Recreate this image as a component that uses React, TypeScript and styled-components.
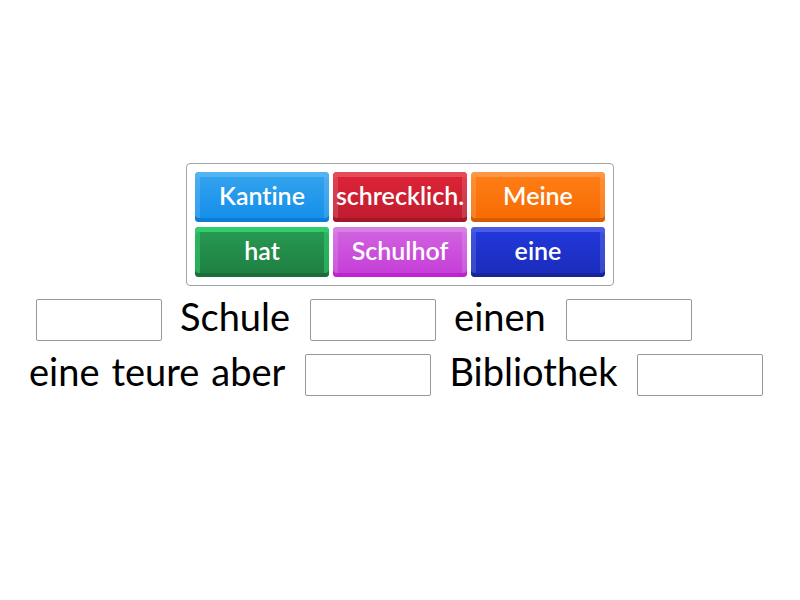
import React from "react";
import styled, { createGlobalStyle } from "styled-components";

const GlobalStyle = createGlobalStyle`
  * { box-sizing: border-box; }
  body {
    margin: 0;
    background: #fff;
    color: #000;
    font-family: Lato, "Noto Sans", sans-serif;
  }
`;

const Page = styled.main`
  display: flex;
  flex-direction: column;
  padding: 163px 0 32px;
`;

const WordTray = styled.section`
  align-self: center;
  display: grid;
  grid-template-columns: repeat(3, 134px);
  gap: 5px 4px;
  padding: 8px;
  border: 1px solid #a3a3a8;
  border-radius: 4px;
`;

type Tone = { top: string; bottom: string; rim: string; side: string; base: string };

const Tile = styled.button<{ $tone: Tone }>`
  display: flex;
  align-items: center;
  justify-content: center;
  height: 50px;
  padding: 0 0 4px;
  border: 0;
  border-radius: 4px;
  background: linear-gradient(${({ $tone }) => `${$tone.top}, ${$tone.bottom}`});
  box-shadow: ${({ $tone }) =>
    `inset 0 -4px ${$tone.base}, inset 0 5px ${$tone.rim}, inset 5px 0 ${$tone.side}, inset -5px 0 ${$tone.side}`};
  color: #fff;
  font: 600 25px/30px Lato, "Noto Sans", sans-serif;
  font-variant-ligatures: none;
  white-space: nowrap;
  cursor: grab;
`;

const Sentence = styled.section`
  display: flex;
  flex-direction: column;
  gap: 13px;
  padding: 13px 29px 0;
`;

const Line = styled.div<{ $indent?: number }>`
  display: flex;
  align-items: center;
  gap: 18px;
  height: 42px;
  padding-left: ${({ $indent = 0 }) => $indent}px;
  font-size: 38px;
  line-height: 42px;
  white-space: nowrap;
`;

const Words = styled.span`
  display: flex;
  gap: 12px;
  padding-bottom: 8px;
`;

const Blank = styled.input`
  flex: none;
  width: 126px;
  height: 42px;
  margin: 0 0 0 2px;
  padding: 0 8px;
  border: 1px solid #98989c;
  border-radius: 2px;
  background: #fff;
  font: 600 25px/30px Lato, "Noto Sans", sans-serif;
  text-align: center;
`;

const tiles: { word: string; tone: Tone }[] = [
  { word: "Kantine", tone: { top: "#35a4ee", bottom: "#128eea", rim: "#54b3f1", side: "#ffffff22", base: "#0b7dd4" } },
  { word: "schrecklich.", tone: { top: "#e02437", bottom: "#bd1c2f", rim: "#e64b5b", side: "#ffffff22", base: "#a51728" } },
  { word: "Meine", tone: { top: "#ff7e18", bottom: "#f66b00", rim: "#ff9644", side: "#ffffff22", base: "#d95c00" } },
  { word: "hat", tone: { top: "#289b53", bottom: "#1e7e42", rim: "#31cc6c", side: "#2fca6a99", base: "#1b6e39" } },
  { word: "Schulhof", tone: { top: "#d066df", bottom: "#c63bd8", rim: "#d980e5", side: "#ffffff22", base: "#bd25cc" } },
  { word: "eine", tone: { top: "#2138dd", bottom: "#1b2cb9", rim: "#4b5ce2", side: "#ffffff22", base: "#17249c" } },
];

export default function App() {
  return (
    <>
      <GlobalStyle />
      <Page>
        <WordTray>
          {tiles.map(({ word, tone }) => (
            <Tile key={word} type="button" $tone={tone}>{word}</Tile>
          ))}
        </WordTray>
        <Sentence>
          <Line $indent={5}>
            <Blank aria-label="Gap 1" />
            <Words>Schule</Words>
            <Blank aria-label="Gap 2" />
            <Words>einen</Words>
            <Blank aria-label="Gap 3" />
          </Line>
          <Line>
            <Words>
              <span>eine</span>
              <span>teure</span>
              <span>aber</span>
            </Words>
            <Blank aria-label="Gap 4" />
            <Words>Bibliothek</Words>
            <Blank aria-label="Gap 5" />
          </Line>
        </Sentence>
      </Page>
    </>
  );
}
